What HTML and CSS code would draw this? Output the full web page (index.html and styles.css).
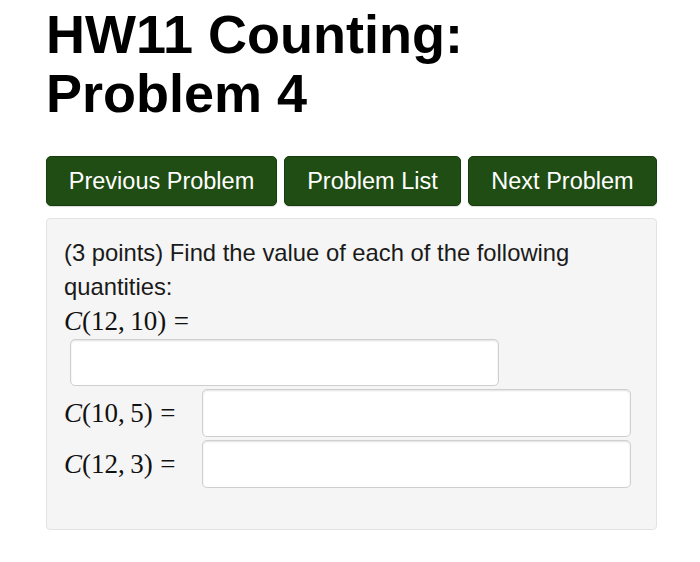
FILE: index.html
```html
<!DOCTYPE html>
<html>
<head>
<meta charset="utf-8">
<link rel="stylesheet" href="styles.css">
</head>
<body>
<main class="page">
  <h1 class="title">HW11 Counting:<br>Problem 4</h1>
  <nav class="nav">
    <button class="btn">Previous Problem</button>
    <button class="btn">Problem List</button>
    <button class="btn">Next Problem</button>
  </nav>
  <section class="panel">
    <p class="prompt">(3 points) Find the value of each of the following quantities:</p>
    <div class="math-line"><span class="math"><i>C</i>(12,&#8201;10)<span class="eq">=</span></span></div>
    <div class="first-input"><input class="answer" type="text"></div>
    <div class="rows">
      <span class="math"><i>C</i>(10,&#8201;5)<span class="eq">=</span></span>
      <input class="answer" type="text">
      <span class="math"><i>C</i>(12,&#8201;3)<span class="eq">=</span></span>
      <input class="answer" type="text">
    </div>
  </section>
</main>
</body>
</html>
```
FILE: styles.css
```css
html, body {
  margin: 0;
  padding: 0;
  background: #ffffff;
}
.page {
  padding: 5px 43px 0 46px;
  font-family: "Liberation Sans", Arial, sans-serif;
}
.title {
  margin: 0;
  font-size: 54px;
  line-height: 59px;
  font-weight: bold;
  color: #000;
}
.nav {
  display: flex;
  gap: 7px;
  margin-top: 33px;
}
.btn {
  height: 50px;
  padding: 0;
  font-family: "Liberation Sans", Arial, sans-serif;
  font-size: 23.5px;
  color: #ffffff;
  background: #1f4d13;
  border: 1px solid #173c0e;
  border-radius: 5px;
  box-shadow: 0 1px 1px rgba(0,0,0,0.15);
}
.btn:first-child { flex: 0 0 231px; }
.btn:nth-child(2) { flex: 0 0 177px; }
.btn:nth-child(3) { flex: 0 0 189px; }
.panel {
  margin-top: 12px;
  width: 611px;
  box-sizing: border-box;
  background: #f5f5f5;
  border: 1px solid #e3e3e3;
  border-radius: 4px;
  padding: 17px 17px 41px 17px;
  color: #1a1a1a;
  font-size: 23.8px;
  line-height: 34px;
}
.prompt {
  margin: 0;
}
.math {
  font-family: "Liberation Serif", "Times New Roman", serif;
  font-size: 27px;
  color: #111;
  white-space: nowrap;
}
.math i {
  font-style: italic;
}
.eq {
  margin-left: 0.28em;
}
.math-line {
  height: 34px;
  line-height: 34px;
}
.first-input {
  margin-top: 1px;
  padding-left: 6px;
}
.answer {
  display: block;
  width: 429px;
  height: 47px;
  box-sizing: border-box;
  margin: 0;
  background: #ffffff;
  border: 1px solid #cfcfcf;
  border-radius: 5px;
  box-shadow: inset 0 1px 2px rgba(0,0,0,0.12);
}
.rows {
  display: grid;
  grid-template-columns: 138px 429px;
  row-gap: 3px;
  align-items: center;
  margin-top: 3px;
}
.rows .answer {
  height: 48px;
}
```
